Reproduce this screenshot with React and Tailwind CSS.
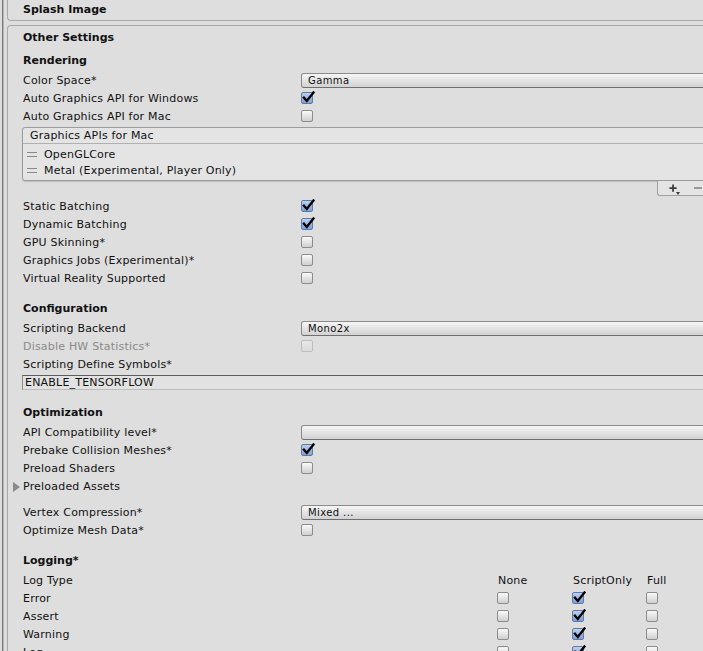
import React from "react";

const FONT = { fontFamily: '"DejaVu Sans", Verdana, sans-serif' };

function Check({ checked = false, disabled = false }) {
  if (checked) {
    return (
      <div className="relative w-[12px] h-[12px] rounded-[2px] border border-[#5f7aa6] bg-gradient-to-b from-[#bcd0f0] to-[#7f9fd6]">
        <svg viewBox="0 0 12 12" className="absolute left-[0px] top-[-2px] w-[13px] h-[13px]">
          <path d="M1.8 6.2 L4.4 9.2 L10.6 1.4" fill="none" stroke="#000" strokeWidth="2.2" strokeLinecap="square" />
        </svg>
      </div>
    );
  }
  if (disabled) {
    return <div className="w-[12px] h-[12px] rounded-[2px] border border-[#bdbdbd] bg-gradient-to-b from-[#e8e8e8] to-[#dadada]" />;
  }
  return <div className="w-[12px] h-[12px] rounded-[2px] border border-[#8c8c8c] bg-gradient-to-b from-[#fafafa] to-[#cfcfcf]" />;
}

function Dropdown({ text }) {
  return (
    <div className="self-start mt-[1px] h-[15px] w-[430px] shrink-0 rounded-l-[3px] border border-[#8a8a8a] border-b-[#6f6f6f] bg-gradient-to-b from-[#f6f6f6] to-[#d2d2d2] pl-[6px] flex items-center text-[10px] tracking-[0.4px] text-[#111]">
      {text}
    </div>
  );
}

function Row({ label, children, disabled = false, triangle = false }) {
  return (
    <div className="h-[18px] flex items-center">
      <div className={`relative w-[292px] shrink-0 pl-[15px] tracking-[0.2px] ${disabled ? "text-[#8a8a8a]" : "text-[#111]"}`}>
        {triangle && (
          <span className="absolute left-[5px] top-[1px] w-0 h-0 border-y-[5px] border-y-transparent border-l-[7px] border-l-[#8a8a8a]" />
        )}
        {label}
      </div>
      {children && <div className="flex items-center pl-[1px]">{children}</div>}
    </div>
  );
}

function Header({ children, className = "" }) {
  return <div className={`h-[18px] flex items-center pl-[15px] font-bold text-[#111] ${className}`}>{children}</div>;
}

function Handle() {
  return (
    <div className="w-[10px] flex flex-col gap-[3px] mr-[7px]">
      <div className="h-[1px] bg-[#8a8a8a]" />
      <div className="h-[1px] bg-[#8a8a8a]" />
    </div>
  );
}

function LogRow({ label, header = false, values = [] }) {
  return (
    <div className="h-[18px] flex items-center text-[#111] tracking-[0.2px]">
      <div className="w-[489px] shrink-0 pl-[15px]">{label}</div>
      {header ? (
        <>
          <div className="w-[75px] pl-[1px]">None</div>
          <div className="w-[74px] pl-[1px]">ScriptOnly</div>
          <div className="pl-[1px]">Full</div>
        </>
      ) : (
        <>
          <div className="w-[75px]"><Check checked={values[0]} /></div>
          <div className="w-[74px]"><Check checked={values[1]} /></div>
          <div><Check checked={values[2]} /></div>
        </>
      )}
    </div>
  );
}

export default function App() {
  return (
    <div className="w-[703px] h-[651px] overflow-hidden bg-[#dedede] flex text-[11px] leading-none" style={FONT}>
      <div className="w-[2px] shrink-0" />
      <div className="w-[1px] shrink-0 bg-[#7a7a7a]" />
      <div className="w-[1px] shrink-0 bg-[#b5b5b5]" />
      <div className="flex-1 pl-[3px] flex flex-col min-w-0">
        {/* Splash Image */}
        <div className="h-[21px] shrink-0 border-l border-b border-[#a8a8a8] rounded-bl-[4px] flex items-center pl-[15px] pb-[1px] font-bold text-[#111]">
          Splash Image
        </div>
        {/* Other Settings */}
        <div className="mt-[4px] flex-1 border-l border-t border-[#a8a8a8] rounded-tl-[4px] flex flex-col">
          <div className="h-[22px] flex items-center pl-[15px] font-bold text-[#111]">Other Settings</div>
          <Header className="mt-[3px]">Rendering</Header>
          <div className="mt-[2px]">
            <Row label="Color Space*"><Dropdown text="Gamma" /></Row>
            <Row label="Auto Graphics API for Windows"><Check checked /></Row>
            <Row label="Auto Graphics API for Mac"><Check /></Row>
          </div>
          {/* Graphics APIs list */}
          <div className="mt-[2px] ml-[14px] w-[700px] border border-[#9c9c9c] rounded-[3px] bg-[#e4e4e4] shadow-[0_1px_1px_rgba(0,0,0,0.15)] tracking-[0.2px]">
            <div className="h-[16px] flex items-center pl-[7px] border-b border-[#b0b0b0] text-[#111]">Graphics APIs for Mac</div>
            <div className="pt-[2px] pb-[2px]">
              <div className="h-[16px] flex items-center pl-[4px] text-[#111]"><Handle />OpenGLCore</div>
              <div className="h-[16px] flex items-center pl-[4px] text-[#111]"><Handle />Metal (Experimental, Player Only)</div>
            </div>
          </div>
          <div className="flex justify-end">
            <div className="w-[46px] h-[15px] border-l border-b border-[#a0a0a0] rounded-bl-[3px] bg-[#e4e4e4] flex items-center pl-[11px] gap-[16px]">
              <div className="relative">
                <svg viewBox="0 0 10 10" className="w-[9px] h-[9px]">
                  <path d="M4.5 0.5 V8.5 M0.5 4.5 H8.5" stroke="#3d3d3d" strokeWidth="2" />
                </svg>
                <span className="absolute left-[7px] top-[8px] w-0 h-0 border-x-[2px] border-x-transparent border-t-[3px] border-t-[#3d3d3d]" />
              </div>
              <div className="w-[8px] h-[2px] bg-[#9a9a9a]" />
            </div>
          </div>
          <div className="mt-[1px]">
            <Row label="Static Batching"><Check checked /></Row>
            <Row label="Dynamic Batching"><Check checked /></Row>
            <Row label="GPU Skinning*"><Check /></Row>
            <Row label="Graphics Jobs (Experimental)*"><Check /></Row>
            <Row label="Virtual Reality Supported"><Check /></Row>
          </div>
          <Header className="mt-[12px]">Configuration</Header>
          <div className="mt-[2px]">
            <Row label="Scripting Backend"><Dropdown text="Mono2x" /></Row>
            <Row label="Disable HW Statistics*" disabled><Check disabled /></Row>
            <Row label="Scripting Define Symbols*" />
          </div>
          <div className="mt-[2px] ml-[14px] h-[15px] w-[700px] border border-[#8a8a8a] border-t-[#5e5e5e] border-b-[#bdbdbd] bg-[#e2e2e2] flex items-center pl-[2px] text-[#111] tracking-[0.2px]">
            ENABLE_TENSORFLOW
          </div>
          <Header className="mt-[13px]">Optimization</Header>
          <div className="mt-[2px]">
            <Row label="API Compatibility level*"><Dropdown text="" /></Row>
            <Row label="Prebake Collision Meshes*"><Check checked /></Row>
            <Row label="Preload Shaders"><Check /></Row>
            <Row label="Preloaded Assets" triangle />
          </div>
          <div className="mt-[8px]">
            <Row label="Vertex Compression*"><Dropdown text="Mixed ..." /></Row>
            <Row label="Optimize Mesh Data*"><Check /></Row>
          </div>
          <Header className="mt-[12px]">Logging*</Header>
          <div className="mt-[2px]">
            <LogRow label="Log Type" header />
            <LogRow label="Error" values={[false, true, false]} />
            <LogRow label="Assert" values={[false, true, false]} />
            <LogRow label="Warning" values={[false, true, false]} />
            <LogRow label="Log" values={[false, true, false]} />
          </div>
        </div>
      </div>
    </div>
  );
}
